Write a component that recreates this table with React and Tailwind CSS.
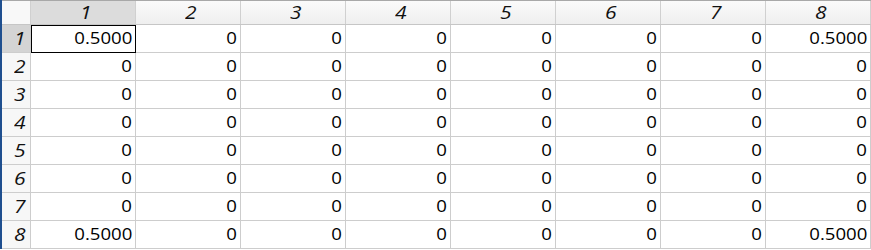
import React from "react";

const N = 8;

const value = (r, c) => {
  const corner = (r === 0 || r === N - 1) && (c === 0 || c === N - 1);
  return corner ? "0.5000" : "0";
};

const num = "font-['Open_Sans','Noto_Sans',sans-serif]";

function Stretch({ children, origin = "origin-right" }) {
  return <span className={`inline-block ${origin} scale-x-[1.2]`}>{children}</span>;
}

export default function App() {
  const cols = Array.from({ length: N }, (_, i) => i);
  return (
    <div className={`w-[871px] h-[250px] bg-white overflow-hidden ${num}`}>
      <div className="border-l-2 border-[#1f4f8f]">
        {/* column headers */}
        <div className="flex h-[25px] border-t border-b border-t-[#a8a8a8] border-b-[#c6c6c6]">
          <div className="w-[29px] shrink-0 border-r border-[#d0d0d0] bg-[#f8f8f8]" />
          {cols.map((c) => (
            <div
              key={c}
              className={`w-[105px] shrink-0 border-r border-[#d0d0d0] flex items-center justify-center pl-[6px] text-[17.5px] leading-none italic text-[#111] ${
                c === 0
                  ? "bg-[#dcdcdc]"
                  : "bg-gradient-to-b from-[#fafafa] to-[#efefef]"
              }`}
            >
              <Stretch origin="origin-center">{c + 1}</Stretch>
            </div>
          ))}
        </div>
        {/* data rows */}
        {cols.map((r) => (
          <div key={r} className="flex h-[28px] border-b border-[#cdcdcd]">
            <div
              className={`w-[29px] shrink-0 border-r border-[#cdcdcd] flex items-center justify-end pr-[4px] text-[17.5px] leading-none italic text-[#111] ${
                r === 0 ? "bg-[#d4d4d4]" : "bg-[#f7f7f7]"
              }`}
            >
              <Stretch>{r + 1}</Stretch>
            </div>
            {cols.map((c) => (
              <div
                key={c}
                className="relative w-[105px] shrink-0 border-r border-[#cdcdcd] flex items-center justify-end pr-[3px] text-[15.5px] text-black"
              >
                <Stretch>{value(r, c)}</Stretch>
                {r === 0 && c === 0 && (
                  <div className="absolute top-0 left-0 -right-px -bottom-px border border-black pointer-events-none" />
                )}
              </div>
            ))}
          </div>
        ))}
      </div>
    </div>
  );
}
